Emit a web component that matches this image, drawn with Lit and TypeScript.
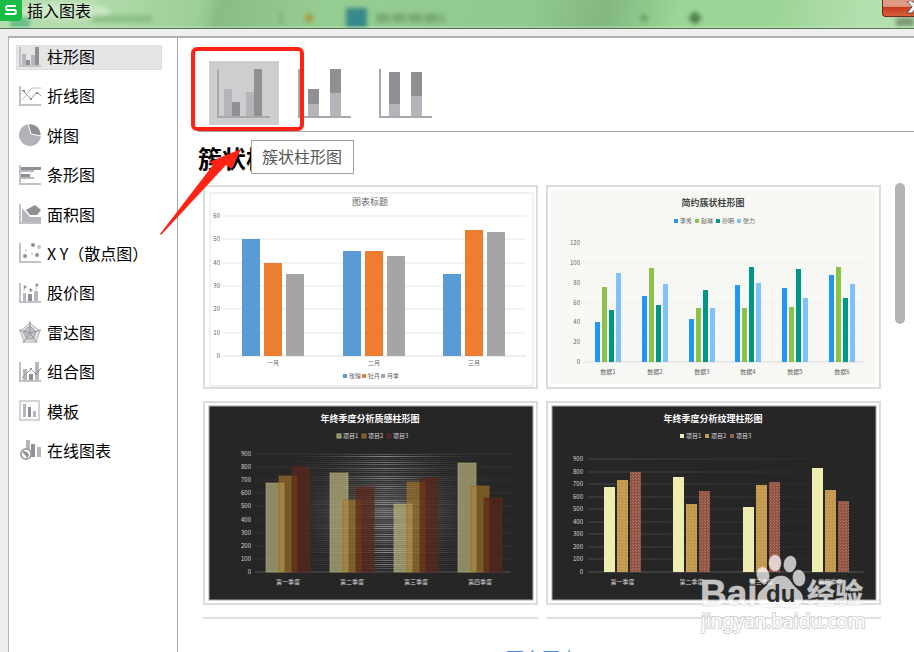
import { LitElement, html, svg, css } from "lit";
import { customElement, property, state } from "lit/decorators.js";

const FONT = css`"Noto Sans CJK SC", "Noto Sans", sans-serif`;

interface Series {
  name: string;
  fill: string;
  stroke?: string;
  swatch?: string;
  values: number[];
}

interface ChartSpec {
  title: string;
  theme: "plain" | "paper" | "glass" | "texture";
  titleY: number;
  titleSize: number;
  legendY: number;
  legendX: number;
  legendStep: number;
  max: number;
  tick: number;
  top: number;
  bottom: number;
  left: number;
  right: number;
  labelX: number;
  labelY: number;
  barWidth: number;
  barStep: number;
  starts: number[];
  categories: string[];
  series: Series[];
}

const quarters = ["第一季度", "第二季度", "第三季度", "第四季度"];

const CHARTS: ChartSpec[] = [
  {
    title: "图表标题", theme: "plain", titleY: 20, titleSize: 9,
    legendY: 193, legendX: 140, legendStep: 19,
    max: 60, tick: 10, top: 31, bottom: 171, left: 20, right: 323,
    labelX: 17, labelY: 180, barWidth: 18, barStep: 22,
    starts: [39, 140, 240],
    categories: ["一月", "二月", "三月"],
    series: [
      { name: "玫瑰", fill: "#5b9bd5", values: [50, 45, 35] },
      { name: "牡丹", fill: "#ed7d31", values: [40, 45, 54] },
      { name: "月季", fill: "#a5a5a5", values: [35, 43, 53] },
    ],
  },
  {
    title: "简约簇状柱形图", theme: "paper", titleY: 21, titleSize: 9,
    legendY: 38, legendX: 128, legendStep: 21,
    max: 120, tick: 20, top: 58, bottom: 177, left: 39, right: 319,
    labelX: 34, labelY: 189, barWidth: 5, barStep: 7,
    starts: [49, 96, 143, 189, 236, 283],
    categories: ["数据1", "数据2", "数据3", "数据4", "数据5", "数据6"],
    series: [
      { name: "李秀", fill: "#2196f3", values: [40, 67, 43, 78, 75, 88] },
      { name: "赵琳", fill: "#8bc34a", values: [76, 95, 54, 54, 55, 96] },
      { name: "孙明", fill: "#009688", values: [52, 57, 73, 96, 94, 65] },
      { name: "张力", fill: "#7fc1f8", values: [90, 79, 54, 80, 65, 79] },
    ],
  },
  {
    title: "年终季度分析质感柱形图", theme: "glass", titleY: 21, titleSize: 9,
    legendY: 37, legendX: 134, legendStep: 25,
    max: 900, tick: 100, top: 53, bottom: 171, left: 52, right: 308,
    labelX: 48, labelY: 183, barWidth: 18, barStep: 13,
    starts: [63, 127, 191, 255],
    categories: quarters,
    series: [
      { name: "项目1", fill: "rgba(190,184,128,.68)", stroke: "#b5b179", values: [680, 755, 520, 830] },
      { name: "项目2", fill: "rgba(176,124,40,.58)", stroke: "#94682a", values: [735, 550, 690, 655] },
      { name: "项目3", fill: "rgba(92,38,26,.72)", stroke: "#5d2a20", values: [800, 645, 720, 565] },
    ],
  },
  {
    title: "年终季度分析纹理柱形图", theme: "texture", titleY: 21, titleSize: 9,
    legendY: 37, legendX: 134, legendStep: 25,
    max: 900, tick: 100, top: 58, bottom: 171, left: 42, right: 318,
    labelX: 37, labelY: 183, barWidth: 11, barStep: 13,
    starts: [58, 127, 197, 266],
    categories: quarters,
    series: [
      { name: "项目1", fill: "#efecb2", values: [680, 755, 520, 830] },
      { name: "项目2", fill: "url(#weaveGold)", swatch: "#c49a4b", values: [730, 545, 690, 655] },
      { name: "项目3", fill: "url(#weaveRed)", swatch: "#9a5f4c", values: [800, 645, 720, 565] },
    ],
  },
];

const AXES = svg`<path d="M1 1v19h21" fill="none" stroke="#c2c2c6" stroke-width="2"/>`;

const CATEGORIES = [
  { label: "柱形图", icon: svg`${AXES}<path d="M3 8h4v11H3zM12 9h4v10h-4z" fill="#b6b7bc"/><path d="M7 14h4v5H7zM16 1h4v18h-4z" fill="#8f9094"/>` },
  { label: "折线图", icon: svg`${AXES}<path d="M3 15L13 3h9" fill="none" stroke="#c0c1c5"/><path d="M3 5l9 9 6-7 4 4" fill="none" stroke="#8f9094"/><path d="M4 5h2v2H4zM11 13h2v2h-2zM17 7h2v2h-2z" fill="#8f9094"/>` },
  { label: "饼图", icon: svg`<circle cx="11" cy="11" r="11" fill="#b2b3b9"/><path d="M9 0a11 11 0 0 1 13 12l-10-2z" fill="#8f9094" stroke="#fff"/>` },
  { label: "条形图", icon: svg`${AXES}<path d="M2 3h20v3H2zM2 10h9v3H2z" fill="#8f9094"/><path d="M2 6h13v2H2zM2 13h13v2H2z" fill="#b6b7bc"/>` },
  { label: "面积图", icon: svg`${AXES}<path d="M3 5l8 9h11v5H3z" fill="#b6b7bc"/><path d="M7 7l9-5 6 5-4 5h-7z" fill="#8f9094"/>` },
  { label: "X Y（散点图）", icon: svg`${AXES}<g fill="#8f9094"><circle cx="14" cy="3" r="2"/><circle cx="6" cy="14" r="2"/><circle cx="18" cy="13" r="2"/></g><g fill="#c2c3c7"><circle cx="7" cy="8" r="1"/><circle cx="20" cy="5" r="2"/><circle cx="13" cy="12" r="1"/></g>` },
  { label: "股价图", icon: svg`${AXES}<path d="M4 11h3v8H4zM15 9h4v10h-4z" fill="#b6b7bc"/><path d="M9 12h4v7H9z" fill="#8f9094"/><path d="M5 3v6M11 6v5M17 1v7" stroke="#c6c7ca"/><path d="M5 3l3 2-3 2zM11 6l3 2-3 2zM17 1l3 2-3 2z" fill="#8f9094"/>` },
  { label: "雷达图", icon: svg`<path d="M11 2l10 8-4 11H5L1 10z" fill="#e0e0e3" stroke="#b5b6b9"/><path d="M11 5l6 6-3 7H8l-4-7z" fill="#c3c4c8" stroke="#a0a1a5"/><path d="M11 0v12l11-3M11 12l7 10M11 12L4 22M11 12L0 9" fill="none" stroke="#8f9094"/>` },
  { label: "组合图", icon: svg`${AXES}<path d="M4 8h4v11H4zM16 1h4v18h-4z" fill="#b6b7bc"/><path d="M10 13h4v6h-4z" fill="#8f9094"/><path d="M3 17l9-9 5 5 5-6" fill="none" stroke="#8f9094"/><path d="M11 7h2v2h-2zM16 12h2v2h-2z" fill="#8f9094"/>` },
  { label: "模板", icon: svg`<path d="M1 1h19v19H1z" fill="#fff" stroke="#d3d4d8" stroke-width="2"/><path d="M4 4h3v13H4zM14 11h3v6h-3z" fill="#b6b7bc"/><path d="M9 7h3v10H9z" fill="#8f9094"/>` },
  { label: "在线图表", icon: svg`<path d="M7 1h4v10H7zM18 8h4v10h-4z" fill="#b6b7bc"/><path d="M12 5h4v13h-4z" fill="#8f9094"/><circle cx="7" cy="15" r="5" fill="#fff" stroke="#a0a1a5" stroke-width="2"/><path d="M4 12l4 1 2 3-2 3-2-3-2-2z" fill="#8f9094"/>` },
];

const SUBTYPES = [
  { label: "簇状柱形图", bars: svg`<path d="M16 29h8v27h-8zM38 32h8v24h-8z" fill="#b4b5ba"/><path d="M24 42h8v14h-8zM46 9h8v47h-8z" fill="#8f9094"/>` },
  { label: "堆积柱形图", bars: svg`<path d="M19 44h11v12H19zM41 33h11v23H41z" fill="#b4b5ba"/><path d="M19 29h11v15H19zM41 9h11v24H41z" fill="#8f9094"/>` },
  { label: "百分比堆积柱形图", bars: svg`<path d="M19 44h11v12H19zM41 36h11v20H41z" fill="#b4b5ba"/><path d="M19 12h11v32H19zM41 12h11v24H41z" fill="#8f9094"/>` },
];

@customElement("chart-preview")
export class ChartPreview extends LitElement {
  @property({ attribute: false }) spec!: ChartSpec;

  static styles = css`
    :host { display: block; }
    svg { display: block; width: 100%; font-family: ${FONT}; }
    .small { font-size: 6px; fill: #666; }
    .tick { font-size: 6px; text-anchor: end; }
    .mid { text-anchor: middle; }
    .title { text-anchor: middle; fill: #666; }
    .grid { stroke: #e6e6e6; }
    .axis { stroke: #dcdcdc; }
    .paper .title { fill: #444; font-weight: 700; }
    .paper .grid { stroke: #f1f2ef; }
    .glass .title, .texture .title { fill: #fff; font-weight: 700; }
    .glass .small, .texture .small { fill: #d8d8d8; }
    .glass .grid { stroke: #333; }
    .texture .grid { stroke: url(#fadeRight); }
    .glass .axis, .texture .axis { stroke: #555; }
  `;

  private backdrop(c: ChartSpec) {
    if (c.theme === "plain")
      return svg`<rect x="7" y="8" width="323" height="193" fill="#fff" stroke="#e2e2e2"/>`;
    if (c.theme === "paper")
      return svg`<rect x="5" y="5" width="324" height="194" fill="#f7f8f3"/>`;
    return svg`<rect x="6" y="5" width="324" height="194" fill="#262626" stroke="#a8a8a8"/>`;
  }

  private sheen() {
    const strength = [0.9, 0.3, 0.5, 0.8, 0.4, 1, 0.5, 0.2, 0.7];
    return svg`<rect x="60" y="51" width="244" height="120" fill="url(#glow)"/>
      ${Array.from({ length: 59 }, (_, i) => svg`<rect x="70" y=${53 + i * 2} width="226" height="1"
        fill="url(#streak)" opacity=${strength[(i * 5 + (i >> 2)) % 9]}/>`)}`;
  }

  render() {
    const c = this.spec;
    const span = c.bottom - c.top;
    const y = (v: number) => Math.round(c.bottom - (v / c.max) * span);
    const ticks = Array.from({ length: c.max / c.tick + 1 }, (_, i) => i * c.tick);
    const groupWidth = c.barStep * (c.series.length - 1) + c.barWidth;
    return html`<svg class=${c.theme} viewBox="2 2 331 200" role="img" aria-label=${c.title}>
      <defs>
        <radialGradient id="glow"><stop offset="0" stop-color="#555"/><stop offset="1" stop-color="#262626" stop-opacity="0"/></radialGradient>
        <linearGradient id="streak" gradientUnits="userSpaceOnUse" x1="70" y1="0" x2="296" y2="0">
          <stop offset="0" stop-color="#262626" stop-opacity="0"/><stop offset=".5" stop-color="#8c8c8c"/><stop offset="1" stop-color="#262626" stop-opacity="0"/>
        </linearGradient>
        <linearGradient id="fadeRight" gradientUnits="userSpaceOnUse" x1="42" y1="0" x2="318" y2="0">
          <stop offset="0" stop-color="#484848"/><stop offset="1" stop-color="#262626"/>
        </linearGradient>
        <pattern id="weaveGold" width="3" height="3" patternUnits="userSpaceOnUse"><rect width="3" height="3" fill="#c1964a"/><path d="M0 0h1v1H0zM2 2h1v1H2z" fill="#d0ab67"/></pattern>
        <pattern id="weaveRed" width="3" height="3" patternUnits="userSpaceOnUse"><rect width="3" height="3" fill="#8f5341"/><path d="M0 0h1v1H0zM2 2h1v1H2z" fill="#ae7a69"/></pattern>
      </defs>
      ${this.backdrop(c)}
      ${c.theme === "glass" ? this.sheen() : ""}
      ${ticks.map((t) => svg`
        <line class=${t === 0 ? "axis" : "grid"} x1=${c.left} x2=${c.right} y1=${y(t)} y2=${y(t)}/>
        <text class="small tick" x=${c.labelX} y=${y(t) + 2}>${t}</text>`)}
      ${c.categories.map((name, g) => svg`
        ${c.series.map((s, i) => svg`<rect x=${c.starts[g] + i * c.barStep} y=${y(s.values[g])} width=${c.barWidth}
          height=${c.bottom - y(s.values[g])} fill=${s.fill} stroke=${s.stroke ?? "none"} stroke-opacity=".6"/>`)}
        <text class="small mid" x=${c.starts[g] + groupWidth / 2} y=${c.labelY}>${name}</text>`)}
      <text class="title" font-size=${c.titleSize} x="167" y=${c.titleY}>${c.title}</text>
      ${c.series.map((s, i) => svg`
        <rect x=${c.legendX + i * c.legendStep} y=${c.legendY - 4} width="4" height="4" fill=${s.swatch ?? s.fill} stroke=${s.stroke ?? "none"}/>
        <text class="small" x=${c.legendX + i * c.legendStep + 6} y=${c.legendY}>${s.name}</text>`)}
    </svg>`;
  }
}

@customElement("app-root")
export class AppRoot extends LitElement {
  @state() private category = 0;
  @state() private subtype = 0;

  static styles = css`
    :host {
      display: flex; flex-direction: column; position: relative;
      height: 100vh; overflow: hidden; background: #f0eff0;
      font-family: ${FONT}; font-size: 16px; color: #000;
    }
    * { box-sizing: border-box; }
    button { font: inherit; color: inherit; border: 0; padding: 0; margin: 0; background: none; cursor: pointer; }
    .titlebar {
      position: relative; flex: none; height: 29px; display: flex; align-items: flex-start; gap: 5px;
      border-bottom: 1px solid #587358;
      background: linear-gradient(105deg, #b5dcae 0 9%, #9ccf96 22%, #8abb87 24%, #96cd92 36%, #91c88f 58%, #82b880 66%, #9cd596 74%, #9bd495 84%, #b4dfae 94%);
    }
    .ghosts { position: absolute; left: 0; top: 0; width: 100%; height: 28px; }
    .logo { display: block; width: 22px; height: 22px; position: relative; }
    .name { position: relative; margin: 0; font-size: 16px; font-weight: 400; line-height: 20px; }
    .close {
      position: relative; margin-left: auto; width: 32px; height: 17px; overflow: hidden;
      border: 1px solid #6e2a24; border-top: 0; border-right: 0; border-bottom-left-radius: 4px;
      background: linear-gradient(#e09a86 0 40%, #c5391b 45%, #d8603c);
    }
    .close svg { display: block; margin-left: 23px; }
    .body {
      flex: 1; min-height: 0; display: flex; margin: 7px 0 0 8px;
      border: 2px solid #adb1b8; border-right: 0; border-bottom: 0; border-left-width: 1px; background: #fff;
    }
    .side { flex: none; width: 169px; padding: 7px 15px 0 7px; border-right: 1px solid #a5a5a5; }
    .list { height: 419px; display: flex; flex-direction: column; justify-content: space-between; margin: 0; padding: 0; list-style: none; }
    .item { display: flex; align-items: center; gap: 6px; width: 100%; height: 25px; padding: 0 0 2px 3px; text-align: left; white-space: nowrap; line-height: 23px; }
    .item.on { background: #e5e5e5; outline: 1px dotted #d6d6d6; outline-offset: -1px; }
    .item svg { flex: none; }
    .main { flex: 1; min-width: 0; display: flex; flex-direction: column; }
    .types { display: flex; gap: 11px; margin-left: 20px; padding: 23px 0 6px 11px; border-bottom: 1px solid #a5a5a5; }
    .type { width: 70px; height: 64px; }
    .type.on { background: #cecece; }
    .type svg { display: block; }
    .scroller { display: flex; align-items: flex-start; padding: 0 9px 0 25px; }
    .gallery { flex: 1; min-width: 0; display: flex; flex-direction: column; }
    .heading { margin: 0 0 2px -5px; font-size: 24px; font-weight: 700; line-height: 51px; }
    .cards { display: grid; grid-template-columns: 1fr 1fr; gap: 12px 8px; }
    .card { border: 2px solid #dcdcdc; background: #fff; }
    .next { height: 2px; background: #e0e0e0; }
    .more { align-self: center; margin-top: 30px; font-size: 18px; line-height: 18px; color: #4a86e8; text-decoration: none; }
    .thumb { flex: none; width: 10px; height: 141px; margin: 51px 0 0 14px; border-radius: 5px; background: #b4b4b7; }
    .tip {
      position: absolute; left: 251px; top: 140px; padding: 0 11px 2px 10px; border: 1px solid #a0a0a0;
      background: #fff; color: #575757; line-height: 30px;
    }
    .marks { position: absolute; left: 0; top: 0; pointer-events: none; }
    .wm { position: absolute; left: 700px; top: 552px; width: 170px; height: 84px; pointer-events: none; }
    .wm text { font-family: "Liberation Sans", sans-serif; }
    .wm .cn { font-family: ${FONT}; }
    .wm .url { font-family: "Noto Sans", sans-serif; }
  `;

  render() {
    return html`
      <header class="titlebar">
        <svg class="ghosts" aria-hidden="true">
          <defs><filter id="soft"><feGaussianBlur stdDeviation="2"/></filter></defs>
          <g filter="url(#soft)">
            <rect x="10" y="17" width="20" height="12" fill="#6abf8b"/>
            <ellipse cx="65" cy="11" rx="45" ry="8" fill="#d5edd0" opacity=".7"/>
            <path d="M92 19h60" stroke="#76b06f" stroke-width="7" opacity=".6"/>
            <path d="M281 12v12" stroke="#719b6d" stroke-width="3" opacity=".6"/>
            <circle cx="309" cy="18" r="4" fill="#a69a41"/>
            <rect x="346" y="8" width="21" height="20" fill="#37898a"/>
            <path d="M376 18h68" stroke="#65975f" stroke-width="9" stroke-dasharray="14 2" opacity=".6"/>
            <circle cx="644" cy="18" r="4" fill="#6fa36c"/>
            <path d="M695 11l7 7-7 7-7-7z" fill="#4f804c"/>
            <path d="M896 22h18" stroke="#7b9a77" stroke-width="9"/>
          </g>
          <path d="M0 27h914" stroke="#c0e6bd" opacity=".7"/>
        </svg>
        <svg class="logo" viewBox="0 0 22 22" aria-hidden="true">
          <rect x="-4" y="-4" width="26" height="25" rx="4" fill="#18bd46"/>
          <path d="M16 6H8q-2 0-2 2t2 2h6q2 0 2 2t-2 2H5" fill="none" stroke="#fff" stroke-width="2"/>
        </svg>
        <h1 class="name">插入图表</h1>
        <button class="close" aria-label="关闭">
          <svg width="16" height="14" viewBox="0 0 16 14"><path d="M1 0h5l4 4 4-4h2v2l-4 4 4 5v1h-4l-3-4-3 4H1l5-6z" fill="#fff" stroke="#55555f"/></svg>
        </button>
      </header>
      <div class="body">
        <nav class="side">
          <ul class="list">
            ${CATEGORIES.map((c, i) => html`<li>
              <button class=${i === this.category ? "item on" : "item"} @click=${() => (this.category = i)}>
                <svg width="22" height="22" viewBox="0 0 22 22" aria-hidden="true">${c.icon}</svg>${c.label}
              </button></li>`)}
          </ul>
        </nav>
        <main class="main">
          <div class="types">
            ${SUBTYPES.map((t, i) => html`
              <button class=${i === this.subtype ? "type on" : "type"} aria-label=${t.label} @click=${() => (this.subtype = i)}>
                <svg width="70" height="64" viewBox="1 1 70 64"><path d="M10 9v48h52" fill="none" stroke="#a8a8ab" stroke-width="2"/>${t.bars}</svg>
              </button>`)}
          </div>
          <div class="scroller">
            <div class="gallery">
              <h2 class="heading">${SUBTYPES[this.subtype].label}</h2>
              <div class="cards">
                ${CHARTS.map((c) => html`<button class="card" aria-label=${c.title}><chart-preview .spec=${c}></chart-preview></button>`)}
                <div class="next"></div><div class="next"></div>
              </div>
              <a class="more" href="#more">更多图表</a>
            </div>
            <div class="thumb"></div>
          </div>
        </main>
      </div>
      <div class="tip" role="tooltip">簇状柱形图</div>
      <svg class="marks" width="320" height="250" aria-hidden="true">
        <rect x="193" y="49" width="109" height="80" rx="4" fill="none" stroke="#ff2314" stroke-width="4"/>
        <path d="M161 235l-1-1 53-69-4-3 32-13-9 20-6-4z" fill="#ff2314"/>
      </svg>
      <svg class="wm" viewBox="0 0 170 84">
        <g fill="#fff" fill-opacity=".72" stroke="#d4d4d4" stroke-opacity=".5">
          <text x="0" y="54" font-size="37" font-weight="700">Bai</text>
          <ellipse cx="63" cy="23" rx="6" ry="8" transform="rotate(-12 63 23)"/>
          <ellipse cx="75" cy="11" rx="6" ry="8"/>
          <ellipse cx="90" cy="12" rx="6" ry="8" transform="rotate(12 90 12)"/>
          <ellipse cx="99" cy="26" rx="6" ry="8" transform="rotate(-8 99 26)"/>
          <path d="M81 24c9 0 10 8 15 12s8 8 6 14-6 6-11 6-6-1-11-1-6 1-11 1-10-1-11-7 1-9 6-13 8-12 17-12z"/>
          <text class="cn" x="107" y="52" font-size="28" font-weight="700">经验</text>
        </g>
        <text x="66" y="50" font-size="24" font-weight="700" fill="#2b2b2b">du</text>
        <text class="url" x="1" y="76" font-size="19" fill="#fff" stroke="#d2d2d2" stroke-width="2" paint-order="stroke">jingyan.baidu.com</text>
      </svg>
    `;
  }
}
